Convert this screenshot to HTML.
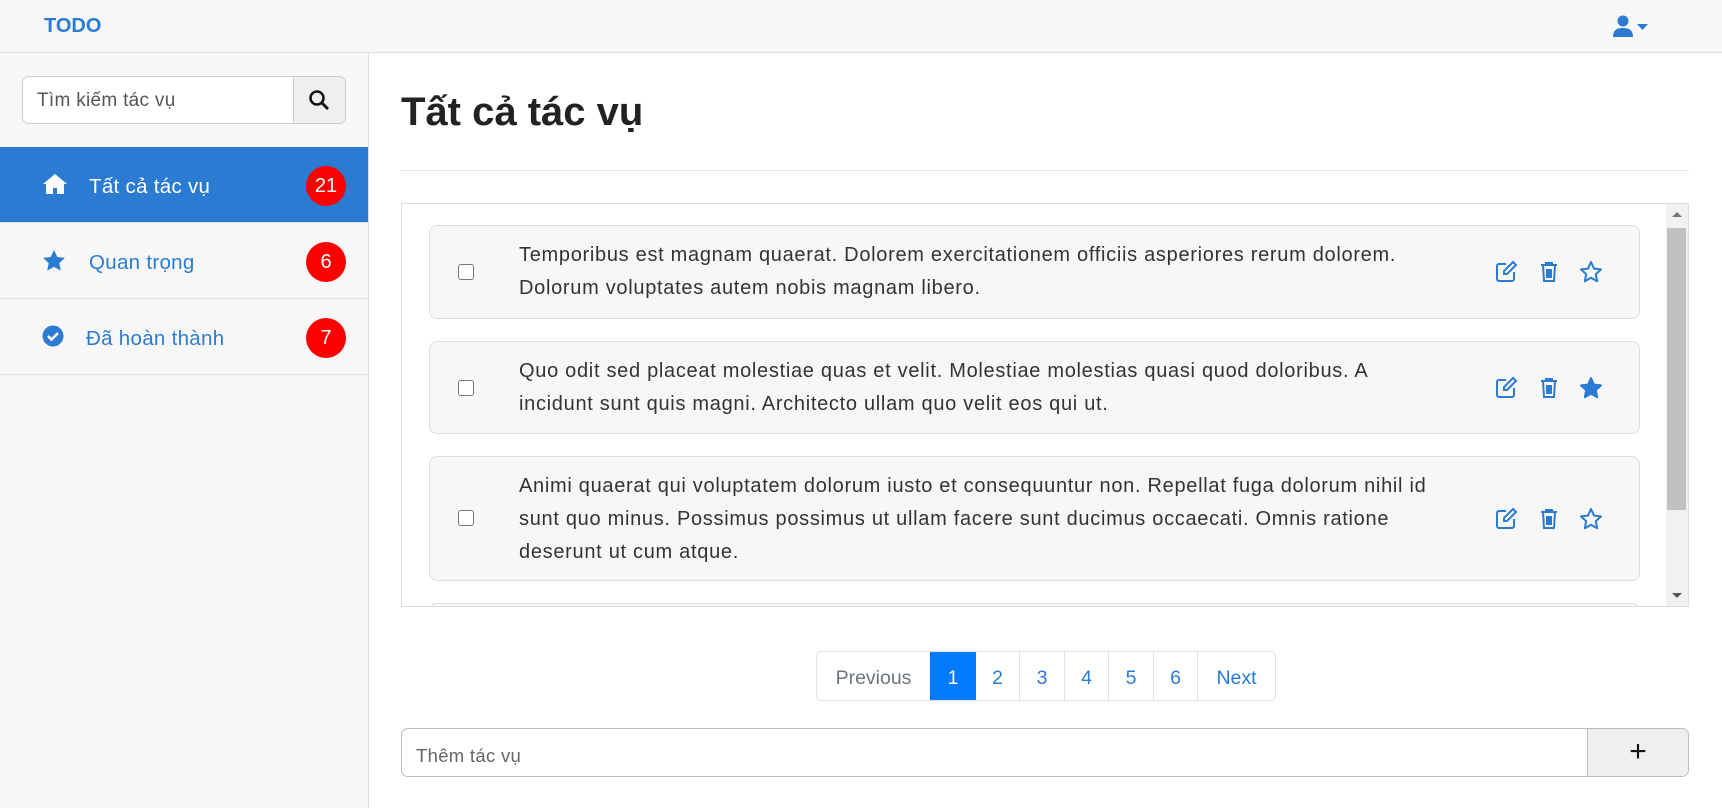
<!DOCTYPE html>
<html><head><meta charset="utf-8"><style>
*{box-sizing:border-box;margin:0;padding:0}
body{width:1722px;height:808px;overflow:hidden;font-family:"Liberation Sans",sans-serif;background:#fff;color:#212529;position:relative}
.nav{position:absolute;left:0;top:0;width:1722px;height:53px;background:#f7f7f7;border-bottom:1px solid #ddd}
.logo{position:absolute;left:44px;top:15px;font-size:20px;font-weight:bold;color:#2b7bd3}
.side{position:absolute;left:0;top:53px;width:369px;height:755px;background:#f7f7f7;border-right:1px solid #ddd}
.search{position:absolute;left:22px;top:23px;width:324px;height:48px;border:1px solid #ccc;border-radius:7px;background:#fff;overflow:hidden}
.search span{position:absolute;left:14px;top:13px;font-size:19px;color:#555;letter-spacing:.3px}
.search .b{position:absolute;right:0;top:0;width:52px;height:46px;background:#efefef;border-left:1px solid #ccc}
.item{position:absolute;left:0;width:368px;height:76px;border-bottom:1px solid #e2e2e2;color:#2b7bd3;font-size:20.5px;letter-spacing:.3px}
.item .t{position:absolute;left:89px;top:28px}
.item .ic{position:absolute;left:42px;top:26px}
.badge{position:absolute;left:306px;top:19px;width:40px;height:40px;border-radius:50%;background:#f00;color:#fff;font-size:20px;text-align:center;line-height:40px;letter-spacing:0}
.act{background:#2b7bd3;color:#fff}
h1{position:absolute;left:401px;top:90px;font-size:40px;font-weight:bold;color:#222}
.hr{position:absolute;left:401px;top:170px;width:1288px;height:1px;background:#e5e5e5}
.list{position:absolute;left:401px;top:203px;width:1288px;height:404px;border:1px solid #ddd;overflow:hidden}
.card{position:absolute;left:27px;width:1211px;background:#f7f7f7;border:1px solid #ddd;border-radius:8px}
.card .cb{position:absolute;left:28px;width:16px;height:16px;border:1.5px solid #777;border-radius:3px;background:#fff}
.card .tx{position:absolute;left:89px;width:915px;font-size:20px;letter-spacing:.7px;line-height:33px;color:#333}
.card .acts{position:absolute;left:1065px;width:120px;height:24px}
.sb{position:absolute;right:0;top:0;width:22px;height:402px;background:#f1f1f1}
.thumb{position:absolute;left:1px;top:24px;width:19px;height:282px;background:#c1c1c1}
.pag{position:absolute;left:816px;top:651px;height:50px;display:flex;border:1px solid #dee2e6;border-radius:5px;overflow:hidden}
.pag div{height:48px;line-height:52px;text-align:center;font-size:19.5px;color:#2b7bd3;border-left:1px solid #dee2e6}
.add{position:absolute;left:401px;top:728px;width:1288px;height:49px;border:1px solid #bbb;border-radius:7px;overflow:hidden}
.add span{position:absolute;left:14px;top:16px;font-size:18.5px;color:#666;letter-spacing:.3px}
.add .b{position:absolute;right:0;top:0;width:101px;height:47px;background:#efefef;border-left:1px solid #bbb;text-align:center;font-size:30px;line-height:45px;color:#111}
</style></head><body>
<div class="nav"><div class="logo">TODO</div>
<svg style="position:absolute;left:1612px;top:15px" width="44" height="24" viewBox="0 0 44 24"><circle cx="11" cy="6" r="5.5" fill="#2b7bd3"/><path d="M1 22c0-7 4-9 10-9s10 2 10 9z" fill="#2b7bd3"/><path d="M25 9h11l-5.5 6z" fill="#2b7bd3"/></svg></div>
<div class="side">
<div class="search"><span>Tìm kiếm tác vụ</span><div class="b"><svg style="position:absolute;left:14px;top:12px" width="22" height="22" viewBox="0 0 22 22"><circle cx="9" cy="9" r="6.5" stroke="#111" stroke-width="2.5" fill="none"/><path d="M14 14l6 6" stroke="#111" stroke-width="2.8"/></svg></div></div>
<div class="item act" style="top:94px"><svg class="ic" width="26" height="22" viewBox="0 0 26 22"><path d="M13 1L1 11h3v10h7v-6h4v6h7V11h3z" fill="#fff"/></svg><span class="t">Tất cả tác vụ</span><div class="badge">21</div></div>
<div class="item" style="top:170px"><svg class="ic" width="24" height="23" viewBox="0 0 24 23"><path d="M12 1l3.3 7 7.6.9-5.6 5.2 1.5 7.5L12 17.9 5.2 21.6l1.5-7.5L1.1 8.9 8.7 8z" fill="#2b7bd3"/></svg><span class="t">Quan trọng</span><div class="badge">6</div></div>
<div class="item" style="top:246px"><svg class="ic" width="22" height="22" viewBox="0 0 22 22"><circle cx="11" cy="11" r="10.5" fill="#2b7bd3"/><path d="M6 11l3.5 3.5L16 8" stroke="#fff" stroke-width="2.6" fill="none"/></svg><span class="t" style="left:86px">Đã hoàn thành</span><div class="badge">7</div></div>
</div>
<h1>Tất cả tác vụ</h1>
<div class="hr"></div>
<div class="list">
<div class="card" style="top:21px;height:94px"><div class="cb" style="top:38px"></div><div class="tx" style="top:13px">Temporibus est magnam quaerat. Dolorem exercitationem officiis asperiores rerum dolorem. Dolorum voluptates autem nobis magnam libero.</div><div class="acts" style="top:34px"><svg width="120" height="24" viewBox="0 0 120 24"><g fill="none" stroke="#2b7bd3" stroke-width="2"><path d="M11 4H4a2 2 0 0 0-2 2v13a2 2 0 0 0 2 2h13a2 2 0 0 0 2-2v-7"/><path d="M18 2l3 3-9 9H9v-3z"/><path d="M46 5h16M51 5V3h6v2M48 5l1 16h10l1-16M52 9v9M54 9v9M56 9v9"/><path d="M96 2l3 6.6 7 .8-5.2 4.8 1.4 7L96 17.7l-6.2 3.5 1.4-7L86 9.4l7-.8z" stroke-linejoin="round"/></g></svg></div></div>
<div class="card" style="top:137px;height:93px"><div class="cb" style="top:38px"></div><div class="tx" style="top:13px">Quo odit sed placeat molestiae quas et velit. Molestiae molestias quasi quod doloribus. A incidunt sunt quis magni. Architecto ullam quo velit eos qui ut.</div><div class="acts" style="top:34px"><svg width="120" height="24" viewBox="0 0 120 24"><g fill="none" stroke="#2b7bd3" stroke-width="2"><path d="M11 4H4a2 2 0 0 0-2 2v13a2 2 0 0 0 2 2h13a2 2 0 0 0 2-2v-7"/><path d="M18 2l3 3-9 9H9v-3z"/><path d="M46 5h16M51 5V3h6v2M48 5l1 16h10l1-16M52 9v9M54 9v9M56 9v9"/><path d="M96 2l3 6.6 7 .8-5.2 4.8 1.4 7L96 17.7l-6.2 3.5 1.4-7L86 9.4l7-.8z" fill="#2b7bd3" stroke-linejoin="round"/></g></svg></div></div>
<div class="card" style="top:252px;height:125px"><div class="cb" style="top:53px"></div><div class="tx" style="top:13px">Animi quaerat qui voluptatem dolorum iusto et consequuntur non. Repellat fuga dolorum nihil id sunt quo minus. Possimus possimus ut ullam facere sunt ducimus occaecati. Omnis ratione deserunt ut cum atque.</div><div class="acts" style="top:50px"><svg width="120" height="24" viewBox="0 0 120 24"><g fill="none" stroke="#2b7bd3" stroke-width="2"><path d="M11 4H4a2 2 0 0 0-2 2v13a2 2 0 0 0 2 2h13a2 2 0 0 0 2-2v-7"/><path d="M18 2l3 3-9 9H9v-3z"/><path d="M46 5h16M51 5V3h6v2M48 5l1 16h10l1-16M52 9v9M54 9v9M56 9v9"/><path d="M96 2l3 6.6 7 .8-5.2 4.8 1.4 7L96 17.7l-6.2 3.5 1.4-7L86 9.4l7-.8z" stroke-linejoin="round"/></g></svg></div></div>
<div class="card" style="top:399px;height:60px"></div>
<div class="sb"><div class="thumb"></div><div style="position:absolute;left:6px;top:8px;border:5px solid transparent;border-bottom:5px solid #777;border-top:0"></div><div style="position:absolute;left:6px;bottom:8px;border:5px solid transparent;border-top:5px solid #555;border-bottom:0"></div></div>
</div>
<div class="pag"><div style="width:113px;color:#6c757d;border-left:0">Previous</div><div style="width:46px;background:#007bff;color:#fff;border-left:0">1</div><div style="width:43px;border-left:0">2</div><div style="width:45px">3</div><div style="width:44px">4</div><div style="width:45px">5</div><div style="width:44px">6</div><div style="width:78px">Next</div></div>
<div class="add"><span>Thêm tác vụ</span><div class="b">+</div></div>
</body></html>
